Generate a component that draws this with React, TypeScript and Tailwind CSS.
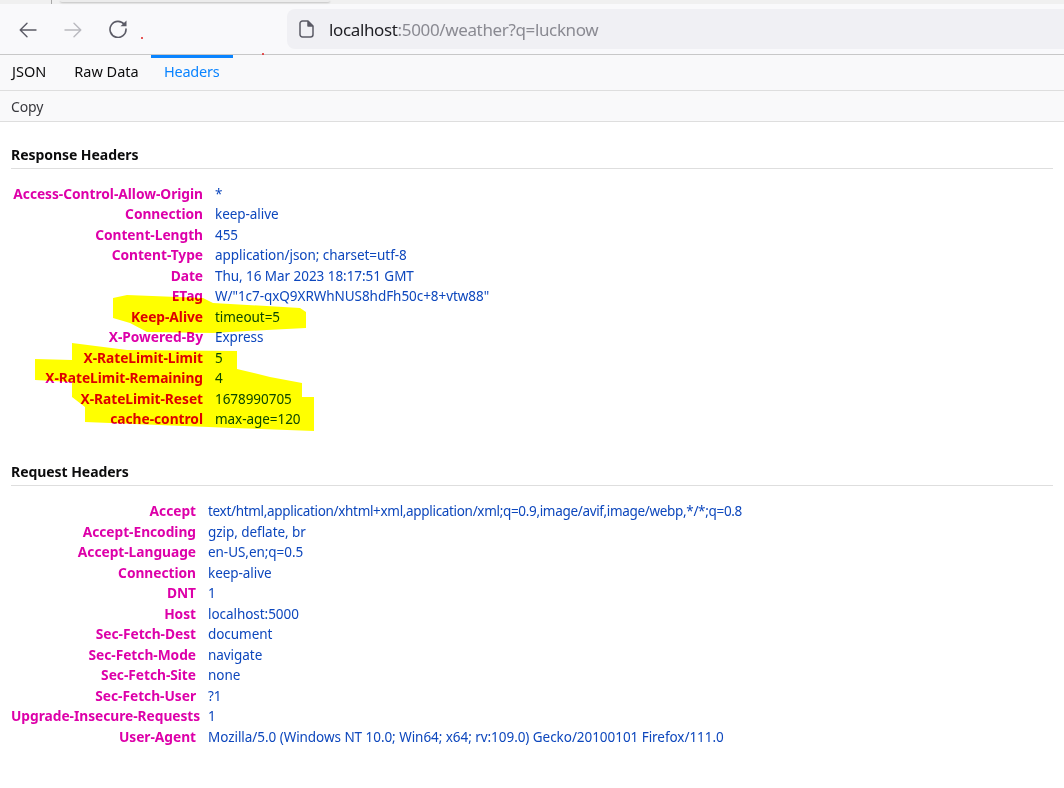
const font = "font-['Noto_Sans','Open_Sans',sans-serif]";

const responseHeaders: [string, string][] = [
  ["Access-Control-Allow-Origin", "*"],
  ["Connection", "keep-alive"],
  ["Content-Length", "455"],
  ["Content-Type", "application/json; charset=utf-8"],
  ["Date", "Thu, 16 Mar 2023 18:17:51 GMT"],
  ["ETag", 'W/"1c7-qxQ9XRWhNUS8hdFh50c+8+vtw88"'],
  ["Keep-Alive", "timeout=5"],
  ["X-Powered-By", "Express"],
  ["X-RateLimit-Limit", "5"],
  ["X-RateLimit-Remaining", "4"],
  ["X-RateLimit-Reset", "1678990705"],
  ["cache-control", "max-age=120"],
];

const requestHeaders: [string, string][] = [
  ["Accept", "text/html,application/xhtml+xml,application/xml;q=0.9,image/avif,image/webp,*/*;q=0.8"],
  ["Accept-Encoding", "gzip, deflate, br"],
  ["Accept-Language", "en-US,en;q=0.5"],
  ["Connection", "keep-alive"],
  ["DNT", "1"],
  ["Host", "localhost:5000"],
  ["Sec-Fetch-Dest", "document"],
  ["Sec-Fetch-Mode", "navigate"],
  ["Sec-Fetch-Site", "none"],
  ["Sec-Fetch-User", "?1"],
  ["Upgrade-Insecure-Requests", "1"],
  ["User-Agent", "Mozilla/5.0 (Windows NT 10.0; Win64; x64; rv:109.0) Gecko/20100101 Firefox/111.0"],
];

function Rows({ rows, labelWidth }: { rows: [string, string][]; labelWidth: string }) {
  return (
    <div className="flex flex-col">
      {rows.map(([k, v], i) => (
        <div key={i} className="flex h-[20.5px] items-center leading-[20px]">
          <div className={`${labelWidth} shrink-0 whitespace-nowrap text-right text-[13.75px] font-bold tracking-[-0.03px] text-[#dd00a9]`}>{k}</div>
          <div className={`ml-3 whitespace-nowrap text-[13.5px] text-[#0d47bd] ${v.length >= 85 ? "tracking-[-0.32px]" : "tracking-[-0.05px]"}`}>{v}</div>
        </div>
      ))}
    </div>
  );
}

export default function App() {
  return (
    <div className={`relative h-[788px] w-[1064px] overflow-hidden bg-white ${font}`}>
      <div className="relative h-1 bg-[#f0f0f0]">
        <div className="absolute left-[51px] top-0 h-1 w-px bg-[#a8a8a8]" />
        <div className="absolute left-[60px] top-0 h-[2px] w-[270px] rounded-b-md bg-[#ececec] shadow-[0_1px_2px_rgba(0,0,0,0.2)]" />
      </div>
      <div className="flex h-[51px] items-center border-b border-[#c8c8c8] bg-[#f9f9fb] pb-[1px] pl-[19px]">
        <svg className="mt-[2px]" width="18" height="16" viewBox="0 0 18 16" fill="none" stroke="#5b5b66" strokeWidth="1.4" strokeLinecap="round" strokeLinejoin="round">
          <path d="M17 8H1.2M8 1.2 1.2 8 8 14.8" />
        </svg>
        <svg className="ml-[27px] mt-[2px]" width="18" height="16" viewBox="0 0 18 16" fill="none" stroke="#b9b9bf" strokeWidth="1.4" strokeLinecap="round" strokeLinejoin="round">
          <path d="M1 8h15.8M10 1.2 16.8 8 10 14.8" />
        </svg>
        <svg className="ml-[27px]" width="18" height="18" viewBox="0 0 18 18" fill="none" stroke="#5b5b66" strokeWidth="1.6" strokeLinecap="round" strokeLinejoin="round">
          <path d="M15.4 4.6A8 8 0 1 0 17 9" />
          <path d="M11.5 6.2h6V.6Z" fill="#5b5b66" stroke="none" />
        </svg>
        <div className="ml-[160px] flex h-10 flex-1 items-center rounded-l-lg bg-[#f0f0f4] pl-3">
          <svg width="15" height="18" viewBox="0 0 15 18" fill="none" stroke="#5b5b66" strokeWidth="1.5" strokeLinejoin="round">
            <path d="M1 3.5a2.5 2.5 0 0 1 2.5-2.5H9l5 5v8.5a2.5 2.5 0 0 1-2.5 2.5h-8A2.5 2.5 0 0 1 1 14.5Z" />
            <path d="M9 1v5h5" fill="#5b5b66" />
          </svg>
          <div className="ml-[15px] whitespace-nowrap pt-[3px] text-[17px] tracking-[-0.36px]">
            <span className="text-[#1f1f24]">localhost</span>
            <span className="text-[#8a8a92]">:5000/weather?q=lucknow</span>
          </div>
        </div>
      </div>
      <div className="flex h-9 border-b border-[#dedede] bg-[#f9f9fa] pb-[2px] text-[14.5px] text-[#0c0c0d]">
        <div className="flex items-center pl-3 pr-[13px]">JSON</div>
        <div className="flex items-center pl-[15px] pr-[12px]">Raw Data</div>
        <div className="-mb-[2px] flex w-[82px] items-center justify-center border-t-[3px] border-[#0a84ff] pb-[5px] tracking-[-0.25px] text-[#0a84ff]">Headers</div>
      </div>
      <div className="flex h-[31px] items-center border-b border-[#dedede] bg-[#f9f9fa] pl-[11px] pt-[1px] text-[14px] tracking-[-0.1px] text-[#38383d]">Copy</div>

      <section className="mt-6 px-[11px]">
        <h2 className="h-[23px] border-b border-[#dedede] text-[14px] font-bold leading-[17px] tracking-[-0.05px] text-[#0c0c0d]">Response Headers</h2>
        <div className="mt-[14.5px]">
          <Rows rows={responseHeaders} labelWidth="w-[192px]" />
        </div>
      </section>
      <section className="mt-[33.5px] px-[11px]">
        <h2 className="h-[23px] border-b border-[#dedede] text-[14px] font-bold leading-[17px] tracking-[-0.05px] text-[#0c0c0d]">Request Headers</h2>
        <div className="mt-[15px]">
          <Rows rows={requestHeaders} labelWidth="w-[185px]" />
        </div>
      </section>

      <svg className="pointer-events-none absolute left-0 top-0 mix-blend-multiply" width="1064" height="788" viewBox="0 0 1064 788">
        <path fill="#ffff00" d="M113 298 L127 295 L203 298 L213 303 L300 308 L306 312 L306 328 L267 330 L213 333 L147 332 L130 323 L113 318 Z" />
        <path fill="#ffff00" d="M72 343 L127 350 L237 351 L237 369 L270 377 L302 383 L302 397 L314 397 L314 431 L233 428 L85 422 L85 407 L72 397 L72 382 L35 380 L35 359 L72 360 Z" />
      </svg>
      <div className="absolute left-[141px] top-[37px] h-[2px] w-[2px] rounded-full bg-[#e02020]" />
      <div className="absolute left-[262px] top-[53px] h-[2px] w-[2px] rounded-full bg-[#e02020]" />
    </div>
  );
}
